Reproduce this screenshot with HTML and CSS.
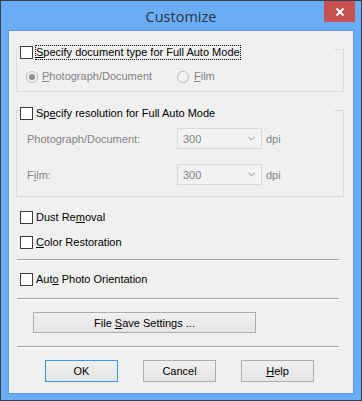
FILE: index.html
```html
<!DOCTYPE html>
<html>
<head>
<meta charset="utf-8">
<link rel="stylesheet" href="styles.css">
</head>
<body>
<div class="window">
  <div class="titlebar">
    <div class="title">Customize</div>
    <div class="close">
      <svg width="31" height="21" viewBox="0 0 31 21"><path d="M12.5 7.5 L19.5 14.5 M19.5 7.5 L12.5 14.5" stroke="#fff" stroke-width="1.9" fill="none"/></svg>
    </div>
  </div>
  <div class="client">
    <div class="group g1">
      <div class="ghead"><span class="cb"></span><span class="lbl focus"><u>S</u>pecify document type for Full Auto Mode</span></div>
      <div class="rrow">
        <div class="ritem first"><span class="radio on"></span><span class="rlbl"><u>P</u>hotograph/Document</span></div>
        <div class="ritem"><span class="radio"></span><span class="rlbl film"><u>F</u>ilm</span></div>
      </div>
    </div>
    <div class="group g2">
      <div class="ghead"><span class="cb"></span><span class="lbl">Sp<u>e</u>cify resolution for Full Auto Mode</span></div>
      <div class="srow s1">
        <span class="slabel">Photograph/Document:</span>
        <div class="select"><span>300</span><svg width="7" height="5" viewBox="0 0 7 5"><path d="M0.5 0.8 L3.5 3.8 L6.5 0.8" stroke="#a6a6a6" stroke-width="1.1" fill="none"/></svg></div>
        <span class="dpi">dpi</span>
      </div>
      <div class="srow s2">
        <span class="slabel">F<u>i</u>lm:</span>
        <div class="select"><span>300</span><svg width="7" height="5" viewBox="0 0 7 5"><path d="M0.5 0.8 L3.5 3.8 L6.5 0.8" stroke="#a6a6a6" stroke-width="1.1" fill="none"/></svg></div>
        <span class="dpi">dpi</span>
      </div>
    </div>
    <div class="crow dust"><span class="cb"></span><span class="lbl">Dust Re<u>m</u>oval</span></div>
    <div class="crow color"><span class="cb"></span><span class="lbl"><u>C</u>olor Restoration</span></div>
    <div class="sep s-a"></div>
    <div class="crow auto"><span class="cb"></span><span class="lbl">Aut<u>o</u> Photo Orientation</span></div>
    <div class="sep s-b"></div>
    <button class="btn fss"><span>File <u>S</u>ave Settings ...</span></button>
    <div class="sep s-c"></div>
    <div class="btnrow">
      <button class="btn ok"><span>OK</span></button>
      <button class="btn"><span>Cancel</span></button>
      <button class="btn"><span><u>H</u>elp</span></button>
    </div>
  </div>
</div>
</body>
</html>
```
FILE: styles.css
```css
body {
  margin: 0;
  font-family: "Liberation Sans", Arial, sans-serif;
  font-size: 11px;
  color: #000;
}
u {
  text-decoration: underline;
  text-underline-offset: 1px;
}
.window {
  width: 362px;
  height: 401px;
  box-sizing: border-box;
  border: 1px solid #3b4047;
  background: #6badf5;
  display: flex;
  flex-direction: column;
}
.titlebar {
  flex: none;
  height: 29px;
  position: relative;
  display: flex;
  justify-content: center;
  align-items: center;
}
.title {
  font-family: "Open Sans", "Noto Sans", sans-serif;
  font-size: 14.5px;
  color: #2c3440;
  padding-top: 1px;
}
.close {
  position: absolute;
  top: 0;
  right: 6px;
  width: 31px;
  height: 21px;
  background: #c75050;
}
.close svg { display: block; }
.client {
  flex: none;
  margin: 0 7px;
  height: 364px;
  box-sizing: border-box;
  border: 1px solid #5c9be2;
  background: #f0f0f0;
  display: flex;
  flex-direction: column;
  align-items: flex-start;
}
.group {
  box-sizing: border-box;
  border: 1px solid #dcdcdc;
  margin-left: 7px;
  width: 328px;
  flex: none;
}
.g1 { margin-top: 18px; height: 43px; }
.g2 { margin-top: 18px; height: 87px; }
.ghead {
  margin-top: -4px;
  margin-left: 3px;
  width: 314px;
  height: 13px;
  background: #f0f0f0;
  display: flex;
  align-items: center;
}
.cb {
  flex: none;
  width: 13px;
  height: 13px;
  box-sizing: border-box;
  border: 1px solid #3c3c3c;
  background: #fff;
}
.lbl {
  margin-left: 3px;
  line-height: 13px;
  white-space: nowrap;
}
.focus {
  outline: 1px dotted #000;
}
.rrow {
  margin-top: 11px;
  height: 13px;
  display: flex;
  align-items: center;
  padding-left: 9px;
  color: #838383;
}
.ritem {
  display: flex;
  align-items: center;
}
.ritem.first { width: 151px; }
.radio {
  flex: none;
  width: 12px;
  height: 12px;
  box-sizing: border-box;
  border-radius: 50%;
  border: 1px solid #bcbcbc;
  background: #f3f3f3;
  display: flex;
  align-items: center;
  justify-content: center;
}
.radio.on::after {
  content: "";
  width: 6px;
  height: 6px;
  border-radius: 50%;
  background: #8f8f8f;
}
.rlbl { margin-left: 4px; line-height: 13px; }
.rlbl.film { margin-left: 5px; }
.srow {
  display: flex;
  align-items: center;
  height: 21px;
  padding-left: 10px;
  color: #838383;
}
.s1 { margin-top: 8px; }
.s2 { margin-top: 15px; }
.slabel { width: 150px; }
.select {
  width: 85px;
  height: 21px;
  box-sizing: border-box;
  border: 1px solid #d9d9d9;
  background: #f2f2f2;
  display: flex;
  align-items: center;
  justify-content: space-between;
  padding: 0 6px 0 5px;
}
.select svg { display: block; }
.dpi { margin-left: 4px; }
.crow {
  flex: none;
  display: flex;
  align-items: center;
  height: 13px;
  margin-left: 11px;
}
.dust { margin-top: 14px; }
.color { margin-top: 12px; }
.auto { margin-top: 12px; }
.sep {
  flex: none;
  margin-left: 8px;
  width: 322px;
  height: 0;
  border-top: 1px solid #a0a0a0;
  border-bottom: 1px solid #ffffff;
}
.s-a { margin-top: 10px; }
.s-b { margin-top: 12px; }
.s-c { margin-top: 13px; }
.btn {
  flex: none;
  box-sizing: border-box;
  border: 1px solid #acacac;
  background: linear-gradient(#f0f0f0, #e5e5e5);
  display: flex;
  align-items: center;
  justify-content: center;
  font: inherit;
  color: #000;
  padding: 0;
  margin: 0;
  border-radius: 0;
  white-space: nowrap;
}
.fss {
  margin: 12px 0 0 24px;
  width: 223px;
  height: 21px;
}
.btnrow {
  margin: 12px 0 0 36px;
  display: flex;
  gap: 25px;
}
.btnrow .btn {
  width: 73px;
  height: 22px;
}
.btn.ok {
  border-color: #3399ff;
}
```
